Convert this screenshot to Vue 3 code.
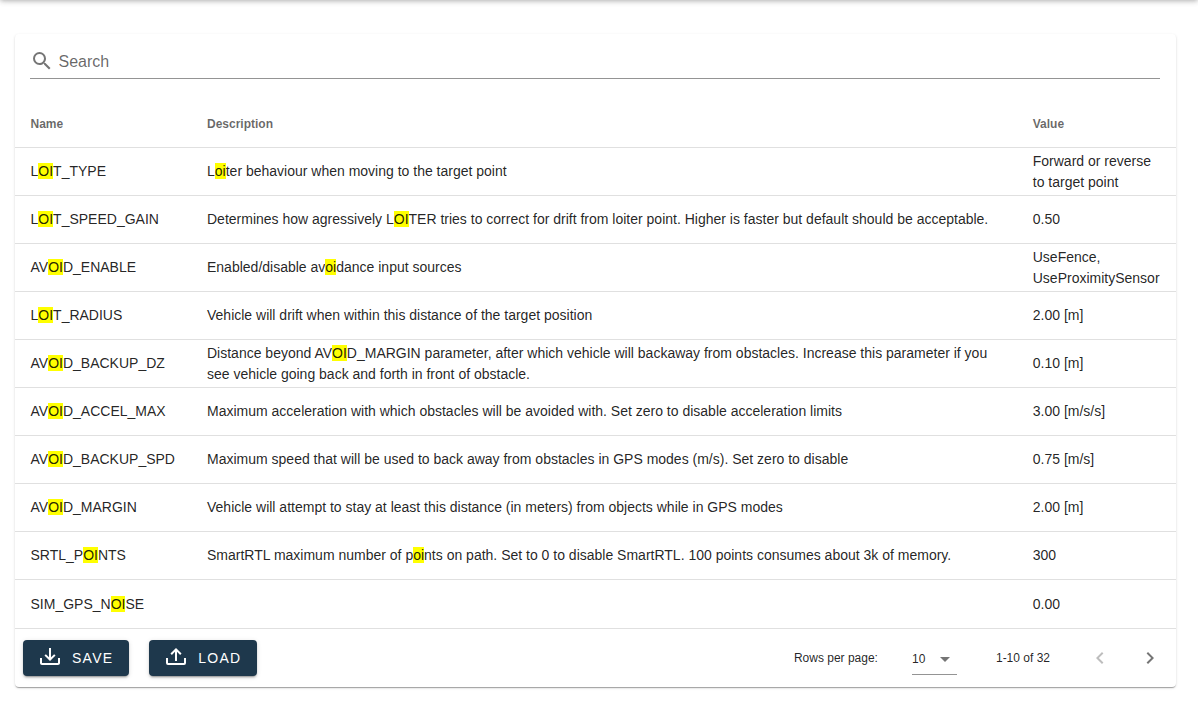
<script setup>
const rows = [
  { name: [['L'], ['OI', 1], ['T_TYPE']], desc: [['L'], ['oi', 1], ['ter behaviour when moving to the target point']], value: 'Forward or reverse to target point' },
  { name: [['L'], ['OI', 1], ['T_SPEED_GAIN']], desc: [['Determines how agressively L'], ['OI', 1], ['TER tries to correct for drift from loiter point. Higher is faster but default should be acceptable.']], value: '0.50' },
  { name: [['AV'], ['OI', 1], ['D_ENABLE']], desc: [['Enabled/disable av'], ['oi', 1], ['dance input sources']], value: 'UseFence, UseProximitySensor' },
  { name: [['L'], ['OI', 1], ['T_RADIUS']], desc: [['Vehicle will drift when within this distance of the target position']], value: '2.00 [m]' },
  { name: [['AV'], ['OI', 1], ['D_BACKUP_DZ']], desc: [['Distance beyond AV'], ['OI', 1], ['D_MARGIN parameter, after which vehicle will backaway from obstacles. Increase this parameter if you see vehicle going back and forth in front of obstacle.']], value: '0.10 [m]' },
  { name: [['AV'], ['OI', 1], ['D_ACCEL_MAX']], desc: [['Maximum acceleration with which obstacles will be avoided with. Set zero to disable acceleration limits']], value: '3.00 [m/s/s]' },
  { name: [['AV'], ['OI', 1], ['D_BACKUP_SPD']], desc: [['Maximum speed that will be used to back away from obstacles in GPS modes (m/s). Set zero to disable']], value: '0.75 [m/s]' },
  { name: [['AV'], ['OI', 1], ['D_MARGIN']], desc: [['Vehicle will attempt to stay at least this distance (in meters) from objects while in GPS modes']], value: '2.00 [m]' },
  { name: [['SRTL_P'], ['OI', 1], ['NTS']], desc: [['SmartRTL maximum number of p'], ['oi', 1], ['nts on path. Set to 0 to disable SmartRTL. 100 points consumes about 3k of memory.']], value: '300' },
  { name: [['SIM_GPS_N'], ['OI', 1], ['SE']], desc: [], value: '0.00' },
]
</script>

<template>
  <div class="page">
    <div class="appbar"></div>
    <main class="card">
      <div class="search">
        <svg class="search-icon" viewBox="0 0 24 24" width="24" height="24"><path d="M9.5,3A6.5,6.5 0 0,1 16,9.5C16,11.11 15.41,12.59 14.44,13.73L14.71,14H15.5L20.5,19L19,20.5L14,15.5V14.71L13.73,14.44C12.59,15.41 11.11,16 9.5,16A6.5,6.5 0 0,1 3,9.5A6.5,6.5 0 0,1 9.5,3M9.5,5C7,5 5,7 5,9.5C5,12 7,14 9.5,14C12,14 14,12 14,9.5C14,7 12,5 9.5,5Z" /></svg>
        <input class="search-input" placeholder="Search" />
      </div>
      <table class="table">
        <colgroup>
          <col class="col-name" />
          <col class="col-desc" />
          <col class="col-value" />
        </colgroup>
        <thead>
          <tr>
            <th>Name</th>
            <th>Description</th>
            <th>Value</th>
          </tr>
        </thead>
        <tbody>
          <tr v-for="(row, i) in rows" :key="i">
            <td><template v-for="(p, j) in row.name" :key="j"><mark v-if="p[1]">{{ p[0] }}</mark><template v-else>{{ p[0] }}</template></template></td>
            <td><template v-for="(p, j) in row.desc" :key="j"><mark v-if="p[1]">{{ p[0] }}</mark><template v-else>{{ p[0] }}</template></template></td>
            <td>{{ row.value }}</td>
          </tr>
        </tbody>
      </table>
      <footer class="footer">
        <button class="btn save">
          <svg viewBox="0 0 24 24" width="24" height="24"><path d="M2 12H4V17H20V12H22V17C22 18.11 21.11 19 20 19H4C2.9 19 2 18.1 2 17V12M12 15L17.55 9.54L16.13 8.13L13 11.25V2H11V11.25L7.88 8.13L6.46 9.55L12 15Z" /></svg>
          <span>Save</span>
        </button>
        <button class="btn load">
          <svg viewBox="0 0 24 24" width="24" height="24"><path d="M2 12H4V17H20V12H22V17A2 2 0 0 1 20 19H4A2 2 0 0 1 2 17V12M12 2L6.46 7.46L7.88 8.88L11 5.75V15H13V5.75L16.13 8.88L17.55 7.45L12 2Z" /></svg>
          <span>Load</span>
        </button>
        <div class="pagination">
          <span class="rows-label">Rows per page:</span>
          <div class="select">
            <span>10</span>
            <svg viewBox="0 0 24 24" width="24" height="24"><path d="M7,10L12,15L17,10H7Z" /></svg>
          </div>
          <span class="range">1-10 of 32</span>
          <svg class="chev prev" viewBox="0 0 24 24" width="24" height="24"><path d="M15.41,16.58L10.83,12L15.41,7.41L14,6L8,12L14,18L15.41,16.58Z" /></svg>
          <svg class="chev next" viewBox="0 0 24 24" width="24" height="24"><path d="M8.59,16.58L13.17,12L8.59,7.41L10,6L16,12L10,18L8.59,16.58Z" /></svg>
        </div>
      </footer>
    </main>
  </div>
</template>

<style scoped>
.page {
  box-sizing: border-box;
  height: 720px;
  overflow: hidden;
  padding: 0 22px 0 15px;
  background: #fff;
  font-family: "Liberation Sans", Arial, sans-serif;
  color: rgba(0, 0, 0, 0.87);
}
.appbar {
  height: 10px;
  margin: -12px -22px 36px -15px;
  box-shadow: 0 2px 4px -1px rgba(0, 0, 0, 0.2), 0 4px 5px 0 rgba(0, 0, 0, 0.14), 0 1px 10px 0 rgba(0, 0, 0, 0.12);
}
.card {
  height: 653px;
  display: flex;
  flex-direction: column;
  background: #fff;
  border-radius: 4px;
  box-shadow: 0 2px 1px -1px rgba(0, 0, 0, 0.2), 0 1px 1px 0 rgba(0, 0, 0, 0.14), 0 1px 3px 0 rgba(0, 0, 0, 0.12);
}
.search {
  display: flex;
  align-items: flex-start;
  gap: 4.5px;
  margin: 15px 16px 0 15px;
  height: 29px;
  border-bottom: 1px solid rgba(0, 0, 0, 0.42);
}
.search-icon {
  fill: rgba(0, 0, 0, 0.54);
  flex: none;
}
.search-input {
  flex: 1;
  height: 24px;
  margin-top: 1px;
  border: 0;
  outline: 0;
  padding: 0;
  background: transparent;
  font: 400 16px "Liberation Sans", Arial, sans-serif;
  color: rgba(0, 0, 0, 0.87);
}
.search-input::placeholder {
  color: rgba(0, 0, 0, 0.6);
  opacity: 1;
}
.table {
  width: 100%;
  margin-top: 25px;
  table-layout: fixed;
  border-collapse: separate;
  border-spacing: 0;
}
.col-name { width: 176.5px; }
.col-value { width: 158.75px; }
th {
  height: 44px;
  padding: 0 16px 4px 15.5px;
  text-align: left;
  font-size: 12px;
  font-weight: 700;
  color: rgba(0, 0, 0, 0.6);
  border-bottom: 1px solid rgba(0, 0, 0, 0.12);
  box-sizing: border-box;
}
td {
  height: 48px;
  padding: 0 16px 0 15.5px;
  font-size: 14px;
  line-height: 21px;
  border-bottom: 1px solid rgba(0, 0, 0, 0.12);
  box-sizing: border-box;
}
mark {
  background: #ff0;
  color: inherit;
}
tbody tr:last-child td {
  height: 49px;
}
.footer {
  flex: 1;
  display: flex;
  align-items: center;
  padding: 0 8px;
  gap: 20px;
}
.btn {
  display: flex;
  align-items: center;
  height: 36px;
  border: 0;
  border-radius: 4px;
  padding: 0 16px 0 15px;
  gap: 10px;
  background: #1e384c;
  color: #fff;
  font: 500 14px "Liberation Sans", Arial, sans-serif;
  letter-spacing: 0.0892857em;
  text-transform: uppercase;
  box-shadow: 0 3px 1px -2px rgba(0, 0, 0, 0.2), 0 2px 2px 0 rgba(0, 0, 0, 0.14), 0 1px 5px 0 rgba(0, 0, 0, 0.12);
}
.btn svg {
  fill: #fff;
}
.pagination {
  margin-left: auto;
  display: flex;
  align-items: center;
  font-size: 12px;
  height: 36px;
}
.rows-label {
  margin-right: 34px;
}
.select {
  box-sizing: border-box;
  width: 45px;
  height: 31px;
  margin-top: 3px;
  display: flex;
  align-items: center;
  justify-content: space-between;
  border-bottom: 1px solid rgba(0, 0, 0, 0.42);
  margin-right: 39px;
}
.select svg {
  fill: rgba(0, 0, 0, 0.54);
}
.range {
  margin-right: 38px;
}
.chev {
  fill: rgba(0, 0, 0, 0.54);
}
.prev {
  fill: rgba(0, 0, 0, 0.26);
  margin-right: 26px;
}
.next {
  margin-right: 6px;
}
</style>

<style>
html, body {
  margin: 0;
  background: #fff;
}
</style>
